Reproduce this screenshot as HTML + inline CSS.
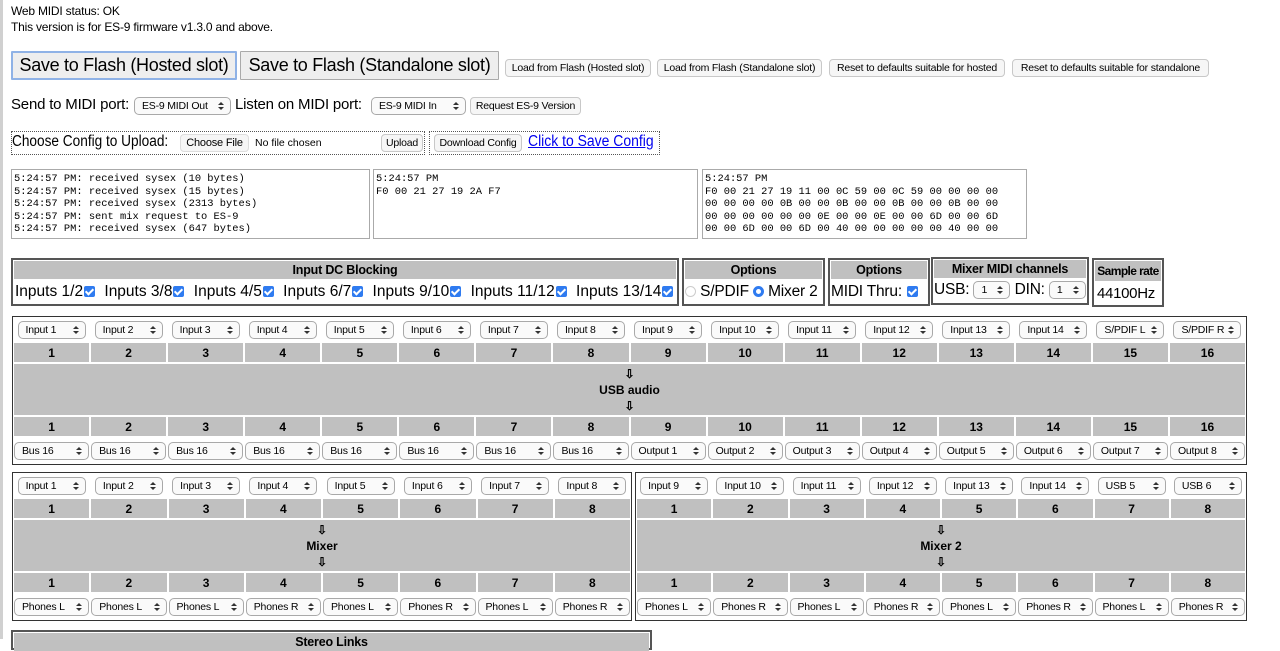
<!DOCTYPE html>
<html><head><meta charset="utf-8">
<style>
*{box-sizing:border-box}
body{margin:0;width:1280px;height:639px;overflow:hidden;background:#fff;font-family:"Liberation Sans",sans-serif;color:#000;position:relative}
.a{position:absolute;white-space:nowrap}
.edge{left:0;top:0;width:3px;height:639px;background:#d0d0d0}
.btn{position:absolute;border:1px solid #c8c8c8;border-radius:4px;background:#f6f6f6;font-size:10.5px;display:flex;align-items:center;justify-content:center;white-space:nowrap;letter-spacing:-0.2px}
.big{border:1px solid #aaa;border-radius:1px;background:#eee;font-size:18px;letter-spacing:-0.3px}
.sel{position:relative;display:inline-flex;align-items:center;border:1px solid #a9a9a9;border-radius:5px;background:#fafafa;font-size:10.5px;padding-left:7px;height:18px;white-space:nowrap;letter-spacing:-0.2px}
.sel::before,.sel::after{content:"";position:absolute;right:6px;border-left:3px solid transparent;border-right:3px solid transparent}
.sel::before{top:4px;border-bottom:3px solid #333}
.sel::after{top:9px;border-top:3px solid #333}
.ta{position:absolute;border:1px solid #aaa;font-family:"Liberation Mono",monospace;font-size:10.4px;line-height:12.5px;padding:3px 2px 1px;white-space:pre;overflow:hidden}
.fs{position:absolute;border:2px solid #555;padding:1px}
.hd{background:#c0c0c0;font-weight:bold;font-size:12.5px;text-align:center;height:18px;line-height:18px;letter-spacing:-0.2px;white-space:nowrap}
.cb{display:inline-block;width:11px;height:11px;background:#2f7bf0;border-radius:2px;position:relative;vertical-align:-1px;margin-left:1px;margin-right:5px}
.cb::after{content:"";position:absolute;left:3px;top:1px;width:3px;height:6px;border:solid #fff;border-width:0 2px 2px 0;transform:rotate(45deg)}
.tbl{position:absolute;border:1px solid #333;padding:1px;display:grid;column-gap:2px;row-gap:2px}
.tbl>div{display:flex;align-items:center;justify-content:center;font-size:12px}
.n{background:#c0c0c0;font-weight:bold}
.mid{background:#c0c0c0;font-weight:bold;flex-direction:column;line-height:16px}
.s2 .sel{width:100%}
.sx{display:inline-block;transform-origin:0 0}
</style></head><body>
<div class="a edge"></div>
<div class="a" style="left:11px;top:4px;font-size:12px;letter-spacing:-0.2px">Web MIDI status: OK</div>
<div class="a" style="left:11px;top:20px;font-size:12px;letter-spacing:-0.2px">This version is for ES-9 firmware v1.3.0 and above.</div>

<div class="btn big" style="left:11px;top:51px;width:226px;height:29px;border:2px solid #8fb2e6">Save to Flash (Hosted slot)</div>
<div class="btn big" style="left:240px;top:51px;width:259px;height:29px">Save to Flash (Standalone slot)</div>
<div class="btn" style="left:505px;top:59px;width:146px;height:18px">Load from Flash (Hosted slot)</div>
<div class="btn" style="left:657px;top:59px;width:165px;height:18px">Load from Flash (Standalone slot)</div>
<div class="btn" style="left:829px;top:59px;width:176px;height:18px">Reset to defaults suitable for hosted</div>
<div class="btn" style="left:1012px;top:59px;width:197px;height:18px">Reset to defaults suitable for standalone</div>

<div class="a" style="left:11px;top:96px;font-size:15px;letter-spacing:-0.2px">Send to MIDI port:</div>
<span class="sel" style="position:absolute;left:134px;top:97px;width:97px">ES-9 MIDI Out</span>
<div class="a" style="left:235px;top:96px;font-size:15px;letter-spacing:-0.2px">Listen on MIDI port:</div>
<span class="sel" style="position:absolute;left:371px;top:97px;width:95px">ES-9 MIDI In</span>
<div class="btn" style="left:470px;top:97px;width:111px;height:18px">Request ES-9 Version</div>

<div class="a" style="left:11px;top:131px;width:414px;height:24px;border:1px dotted #555"></div>
<div class="a" style="left:12px;top:133px;font-size:15.5px"><span class="sx" style="transform:scaleX(.88)">Choose Config to Upload:</span></div>
<div class="btn" style="left:180px;top:134px;width:69px;height:18px;border-color:#ddd;font-size:11px">Choose File</div>
<div class="a" style="left:255px;top:137px;font-size:10.5px">No file chosen</div>
<div class="btn" style="left:381px;top:134px;width:42px;height:18px">Upload</div>
<div class="a" style="left:429px;top:131px;width:231px;height:24px;border:1px dotted #555"></div>
<div class="btn" style="left:434px;top:134px;width:88px;height:18px">Download Config</div>
<div class="a" style="left:528px;top:133px;font-size:15.5px;color:#0000ee"><span class="sx" style="transform:scaleX(.9);text-decoration:underline">Click to Save Config</span></div>

<div class="ta" style="left:11px;top:169px;width:359px;height:70px">5:24:57 PM: received sysex (10 bytes)
5:24:57 PM: received sysex (15 bytes)
5:24:57 PM: received sysex (2313 bytes)
5:24:57 PM: sent mix request to ES-9
5:24:57 PM: received sysex (647 bytes)</div>
<div class="ta" style="left:373px;top:169px;width:325px;height:70px">5:24:57 PM
F0 00 21 27 19 2A F7</div>
<div class="ta" style="left:702px;top:169px;width:325px;height:70px">5:24:57 PM
F0 00 21 27 19 11 00 0C 59 00 0C 59 00 00 00 00
00 00 00 00 0B 00 00 0B 00 00 0B 00 00 0B 00 00
00 00 00 00 00 00 0E 00 00 0E 00 00 6D 00 00 6D
00 00 6D 00 00 6D 00 40 00 00 00 00 00 40 00 00</div>

<div class="fs" style="left:11px;top:258px;width:668px;height:48px">
<div class="hd">Input DC Blocking</div>
<div style="font-size:15.5px;margin-top:4px;margin-left:1px;white-space:nowrap">Inputs 1/2<span class="cb"></span> Inputs 3/8<span class="cb"></span> Inputs 4/5<span class="cb"></span> Inputs 6/7<span class="cb"></span> Inputs 9/10<span class="cb"></span> Inputs 11/12<span class="cb"></span> Inputs 13/14<span class="cb"></span></div>
</div>
<div class="fs" style="left:682px;top:258px;width:143px;height:48px">
<div class="hd">Options</div>
<div style="font-size:15.5px;margin-top:4px;white-space:nowrap;letter-spacing:-0.2px"><span style="display:inline-block;width:11px;height:11px;border:1px solid #ccc;border-radius:50%;vertical-align:-1px"></span> S/PDIF <span style="display:inline-block;width:11px;height:11px;border:3px solid #2f7bf0;border-radius:50%;vertical-align:-1px;background:#fff"></span> Mixer 2</div>
</div>
<div class="fs" style="left:828px;top:258px;width:102px;height:48px">
<div class="hd">Options</div>
<div style="font-size:15.5px;margin-top:4px;white-space:nowrap;letter-spacing:-0.2px">MIDI Thru: <span class="cb"></span></div>
</div>
<div class="fs" style="left:931px;top:257px;width:158px;height:48px">
<div class="hd">Mixer MIDI channels</div>
<div style="font-size:15.5px;margin-top:3px;white-space:nowrap;letter-spacing:-0.2px">USB: <span class="sel" style="width:37px;vertical-align:1px">1</span> DIN: <span class="sel" style="width:37px;vertical-align:1px">1</span></div>
</div>
<div class="fs" style="left:1092px;top:258px;width:72px;height:49px">
<div class="hd" style="height:20px;line-height:20px;font-size:12px;letter-spacing:-0.6px">Sample rate</div>
<div style="font-size:15px;margin-top:4px;margin-left:2px;letter-spacing:-0.3px">44100Hz</div>
</div>

<div class="tbl" style="left:12px;top:316px;width:1235px;grid-template-columns:repeat(16,1fr);grid-template-rows:23px 19px 51px 19px 25px">
<div><span class="sel" style="width:68px">Input 1</span></div><div><span class="sel" style="width:68px">Input 2</span></div><div><span class="sel" style="width:68px">Input 3</span></div><div><span class="sel" style="width:68px">Input 4</span></div><div><span class="sel" style="width:68px">Input 5</span></div><div><span class="sel" style="width:68px">Input 6</span></div><div><span class="sel" style="width:68px">Input 7</span></div><div><span class="sel" style="width:68px">Input 8</span></div><div><span class="sel" style="width:68px">Input 9</span></div><div><span class="sel" style="width:68px">Input 10</span></div><div><span class="sel" style="width:68px">Input 11</span></div><div><span class="sel" style="width:68px">Input 12</span></div><div><span class="sel" style="width:68px">Input 13</span></div><div><span class="sel" style="width:68px">Input 14</span></div><div><span class="sel" style="width:68px">S/PDIF L</span></div><div><span class="sel" style="width:68px">S/PDIF R</span></div>
<div class="n">1</div><div class="n">2</div><div class="n">3</div><div class="n">4</div><div class="n">5</div><div class="n">6</div><div class="n">7</div><div class="n">8</div><div class="n">9</div><div class="n">10</div><div class="n">11</div><div class="n">12</div><div class="n">13</div><div class="n">14</div><div class="n">15</div><div class="n">16</div>
<div class="mid" style="grid-column:1/17"><span>⇩</span><span>USB audio</span><span>⇩</span></div>
<div class="n">1</div><div class="n">2</div><div class="n">3</div><div class="n">4</div><div class="n">5</div><div class="n">6</div><div class="n">7</div><div class="n">8</div><div class="n">9</div><div class="n">10</div><div class="n">11</div><div class="n">12</div><div class="n">13</div><div class="n">14</div><div class="n">15</div><div class="n">16</div>
<div class="s2"><span class="sel">Bus 16</span></div><div class="s2"><span class="sel">Bus 16</span></div><div class="s2"><span class="sel">Bus 16</span></div><div class="s2"><span class="sel">Bus 16</span></div><div class="s2"><span class="sel">Bus 16</span></div><div class="s2"><span class="sel">Bus 16</span></div><div class="s2"><span class="sel">Bus 16</span></div><div class="s2"><span class="sel">Bus 16</span></div><div class="s2"><span class="sel">Output 1</span></div><div class="s2"><span class="sel">Output 2</span></div><div class="s2"><span class="sel">Output 3</span></div><div class="s2"><span class="sel">Output 4</span></div><div class="s2"><span class="sel">Output 5</span></div><div class="s2"><span class="sel">Output 6</span></div><div class="s2"><span class="sel">Output 7</span></div><div class="s2"><span class="sel">Output 8</span></div>
</div>

<div class="tbl" style="left:12px;top:472px;width:620px;grid-template-columns:repeat(8,1fr);grid-template-rows:23px 19px 51px 19px 25px">
<div><span class="sel" style="width:68px">Input 1</span></div><div><span class="sel" style="width:68px">Input 2</span></div><div><span class="sel" style="width:68px">Input 3</span></div><div><span class="sel" style="width:68px">Input 4</span></div><div><span class="sel" style="width:68px">Input 5</span></div><div><span class="sel" style="width:68px">Input 6</span></div><div><span class="sel" style="width:68px">Input 7</span></div><div><span class="sel" style="width:68px">Input 8</span></div>
<div class="n">1</div><div class="n">2</div><div class="n">3</div><div class="n">4</div><div class="n">5</div><div class="n">6</div><div class="n">7</div><div class="n">8</div>
<div class="mid" style="grid-column:1/9"><span>⇩</span><span>Mixer</span><span>⇩</span></div>
<div class="n">1</div><div class="n">2</div><div class="n">3</div><div class="n">4</div><div class="n">5</div><div class="n">6</div><div class="n">7</div><div class="n">8</div>
<div class="s2"><span class="sel">Phones L</span></div><div class="s2"><span class="sel">Phones L</span></div><div class="s2"><span class="sel">Phones L</span></div><div class="s2"><span class="sel">Phones R</span></div><div class="s2"><span class="sel">Phones L</span></div><div class="s2"><span class="sel">Phones R</span></div><div class="s2"><span class="sel">Phones L</span></div><div class="s2"><span class="sel">Phones R</span></div>
</div>

<div class="tbl" style="left:635px;top:472px;width:612px;grid-template-columns:repeat(8,1fr);grid-template-rows:23px 19px 51px 19px 25px">
<div><span class="sel" style="width:68px">Input 9</span></div><div><span class="sel" style="width:68px">Input 10</span></div><div><span class="sel" style="width:68px">Input 11</span></div><div><span class="sel" style="width:68px">Input 12</span></div><div><span class="sel" style="width:68px">Input 13</span></div><div><span class="sel" style="width:68px">Input 14</span></div><div><span class="sel" style="width:68px">USB 5</span></div><div><span class="sel" style="width:68px">USB 6</span></div>
<div class="n">1</div><div class="n">2</div><div class="n">3</div><div class="n">4</div><div class="n">5</div><div class="n">6</div><div class="n">7</div><div class="n">8</div>
<div class="mid" style="grid-column:1/9"><span>⇩</span><span>Mixer 2</span><span>⇩</span></div>
<div class="n">1</div><div class="n">2</div><div class="n">3</div><div class="n">4</div><div class="n">5</div><div class="n">6</div><div class="n">7</div><div class="n">8</div>
<div class="s2"><span class="sel">Phones L</span></div><div class="s2"><span class="sel">Phones R</span></div><div class="s2"><span class="sel">Phones L</span></div><div class="s2"><span class="sel">Phones R</span></div><div class="s2"><span class="sel">Phones L</span></div><div class="s2"><span class="sel">Phones R</span></div><div class="s2"><span class="sel">Phones L</span></div><div class="s2"><span class="sel">Phones R</span></div>
</div>

<div class="fs" style="left:11px;top:630px;width:641px;height:20px"><div class="hd">Stereo Links</div></div>
</body></html>
